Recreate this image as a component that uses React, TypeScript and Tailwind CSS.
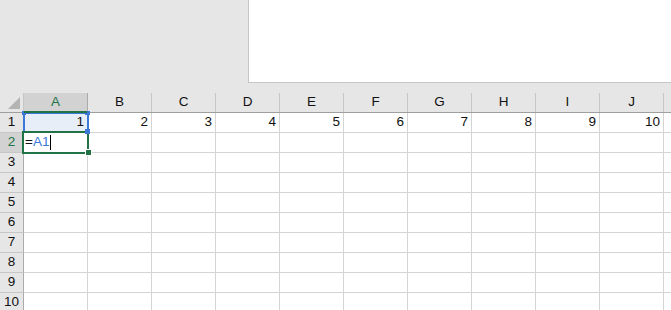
import React from "react";

const cols = ["A", "B", "C", "D", "E", "F", "G", "H", "I", "J"];
const rows = [1, 2, 3, 4, 5, 6, 7, 8, 9, 10];

export default function App() {
  return (
    <div
      className="relative w-[671px] h-[310px] overflow-hidden bg-[#e6e6e6] text-[13.5px] text-[#111111]"
      style={{ fontFamily: '"Liberation Sans", Arial, sans-serif' }}
    >
      {/* top area */}
      <div className="h-[93px] flex justify-end">
        <div className="w-[423px] h-[83px] bg-white border-l border-b border-[#c6c6c6]" />
      </div>

      {/* column header */}
      <div className="flex h-[20px] border-b border-[#9f9f9f]">
        <div className="relative w-[24px] shrink-0 border-r border-[#c6c6c6]">
          <svg className="absolute left-[8px] top-[4px]" width="13" height="12" viewBox="0 0 13 12">
            <polygon points="12,0 12,12 0,12" fill="#b4b4b4" />
          </svg>
        </div>
        {cols.map((c) => (
          <div
            key={c}
            className={
              c === "A"
                ? "w-[64px] shrink-0 flex items-center justify-center bg-[#d2d2d2] text-[#217346] border-r border-[#ababab]"
                : "w-[64px] shrink-0 flex items-center justify-center border-r border-[#c6c6c6]"
            }
          >
            {c}
          </div>
        ))}
        <div className="flex-1" />
      </div>

      {/* rows */}
      {rows.map((r) => (
        <div key={r} className="flex h-[20px] border-b border-[#d4d4d4] bg-white">
          <div
            className={
              r === 2
                ? "w-[24px] shrink-0 flex items-center justify-center bg-[#d2d2d2] text-[#217346] border-r border-[#ababab] border-b border-b-[#c6c6c6] -mb-px"
                : "w-[24px] shrink-0 flex items-center justify-center bg-[#e6e6e6] border-r border-[#ababab] border-b border-b-[#c6c6c6] -mb-px"
            }
          >
            {r}
          </div>
          {cols.map((c, i) => (
            <div
              key={c}
              className={
                r === 1 && c === "A"
                  ? "w-[64px] shrink-0 border-r border-[#d4d4d4] bg-[#e8eef8] flex items-center justify-end pr-[3px]"
                  : "w-[64px] shrink-0 border-r border-[#d4d4d4] flex items-center justify-end pr-[3px]"
              }
            >
              {r === 1 ? i + 1 : ""}
            </div>
          ))}
          <div className="flex-1" />
        </div>
      ))}

      {/* A1 reference border (blue) */}
      <div className="absolute left-[23px] top-[112px] w-[66px] h-[21px] border-2 border-[#3c78d8]" />
      <div className="absolute left-[85px] top-[111px] w-[5px] h-[4px] bg-[#3c78d8]" />
      <div className="absolute left-[22px] top-[111px] w-[4px] h-[4px] bg-[#3c78d8]" />

      {/* column A header underline */}
      <div className="absolute left-[24px] top-[111px] w-[63px] h-[2px] bg-[#217346]" />

      {/* A2 active cell */}
      <div className="absolute left-[22px] top-[131px] w-[67px] h-[23px] border-2 border-[#217346]" />
      <div className="absolute left-[85px] top-[129px] w-[5px] h-[5px] bg-[#3c78d8]" />
      <div className="absolute left-[86px] top-[150px] w-[5px] h-[5px] bg-[#217346] outline outline-1 outline-white" />

      {/* formula text in A2 */}
      <div className="absolute left-[25px] top-[133px] h-[19px] flex items-center">
        <span className="text-[#111111]">=</span>
        <span className="text-[#3c78d8]">A1</span>
        <span className="ml-[1px] inline-block w-px h-[15px] bg-black" />
      </div>
    </div>
  );
}
